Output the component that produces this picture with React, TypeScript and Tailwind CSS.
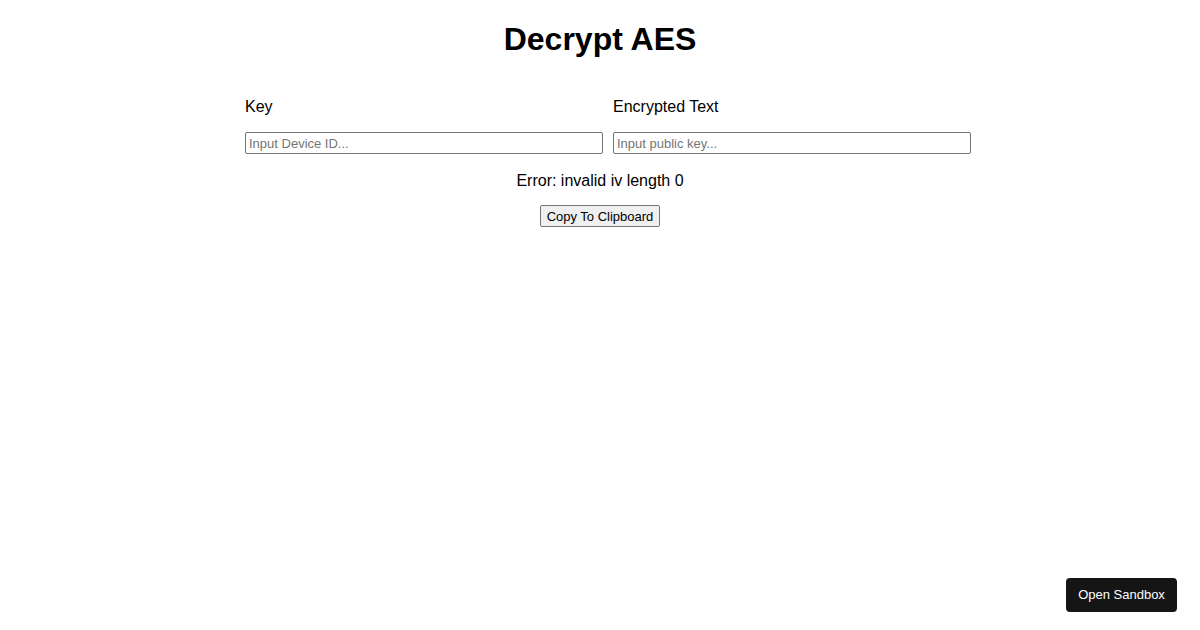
export default function App() {
  return (
    <div className="relative h-[630px] w-full bg-white text-black" style={{ fontFamily: '"Liberation Sans", Arial, sans-serif' }}>
      <h1 className="pt-[21px] text-center text-[32px] font-bold leading-[37px]">Decrypt AES</h1>
      <div className="mt-[40px] flex justify-center pl-[16px]">
        <div className="grid w-[726px] grid-cols-2 gap-x-[10px]">
          <div className="flex flex-col">
            <label className="text-[16px] leading-[18px]">Key</label>
            <input
              placeholder="Input Device ID..."
              className="mt-[16px] h-[22px] w-full rounded-[2px] border border-[#767676] px-[3px] text-[13px] placeholder:text-[#757575]"
            />
          </div>
          <div className="flex flex-col">
            <label className="text-[16px] leading-[18px]">Encrypted Text</label>
            <input
              placeholder="Input public key..."
              className="mt-[16px] h-[22px] w-full rounded-[2px] border border-[#767676] px-[3px] text-[13px] placeholder:text-[#757575]"
            />
          </div>
        </div>
      </div>
      <p className="mt-[18px] text-center text-[16px] leading-[18px]">Error: invalid iv length 0</p>
      <div className="mt-[15px] flex justify-center">
        <button className="h-[22px] w-[120px] rounded-[2px] border border-[#767676] bg-[#efefef] text-[13px] leading-[15px]">
          Copy To Clipboard
        </button>
      </div>
      <button className="absolute right-[23px] bottom-[18px] h-[34px] w-[111px] rounded-[4px] bg-[#151515] text-[13px] text-white">
        Open Sandbox
      </button>
    </div>
  );
}
